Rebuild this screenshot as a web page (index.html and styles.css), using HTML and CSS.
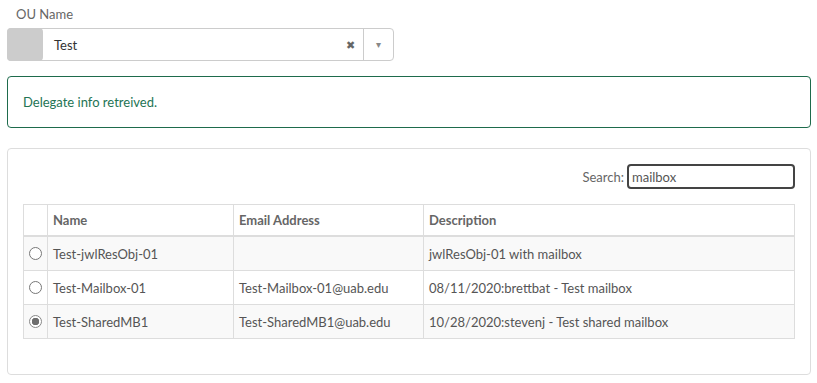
FILE: index.html
```html
<!DOCTYPE html>
<html lang="en">
<head>
    <meta charset="UTF-8">
    <title>Delegates</title>
    <link rel="stylesheet" href="styles.css">
</head>
<body>
    <div class="page">
        <div class="field">
            <label class="field-label">OU Name</label>
            <div class="select">
                <span class="select-swatch"></span>
                <span class="select-value">Test</span>
                <span class="select-clear">&#x2716;</span>
                <span class="select-arrow">&#x25BE;</span>
            </div>
        </div>

        <div class="alert">Delegate info retreived.</div>

        <div class="panel">
            <div class="search">
                <label for="search">Search:</label>
                <input type="text" id="search" value="mailbox">
            </div>
            <table class="grid">
                <thead>
                    <tr>
                        <th class="col-radio"></th>
                        <th class="col-name">Name</th>
                        <th class="col-email">Email Address</th>
                        <th>Description</th>
                    </tr>
                </thead>
                <tbody>
                    <tr>
                        <td class="col-radio"><span class="radio"></span></td>
                        <td>Test-jwlResObj-01</td>
                        <td></td>
                        <td>jwlResObj-01 with mailbox</td>
                    </tr>
                    <tr>
                        <td class="col-radio"><span class="radio"></span></td>
                        <td>Test-Mailbox-01</td>
                        <td>Test-Mailbox-01@uab.edu</td>
                        <td>08/11/2020:brettbat - Test mailbox</td>
                    </tr>
                    <tr>
                        <td class="col-radio"><span class="radio checked"></span></td>
                        <td>Test-SharedMB1</td>
                        <td>Test-SharedMB1@uab.edu</td>
                        <td>10/28/2020:stevenj - Test shared mailbox</td>
                    </tr>
                </tbody>
            </table>
        </div>
    </div>
</body>
</html>
```

FILE: styles.css
```css
body {
    margin: 0;
    font-family: Lato, "Open Sans", sans-serif;
    font-size: 13px;
    color: #555;
    background: #fff;
}
.page {
    padding: 6px 6px 0 7px;
}
.field-label {
    display: block;
    padding-left: 9px;
    height: 22px;
    line-height: 16px;
    color: #666;
}
.select {
    display: flex;
    align-items: center;
    width: 385px;
    height: 31px;
    border: 1px solid #ccc;
    border-radius: 4px;
}
.select-swatch {
    width: 36px;
    height: 33px;
    margin: -1px 0 0 -1px;
    background: #ccc;
    border-radius: 4px;
}
.select-value {
    flex: 1;
    padding-left: 11px;
    color: #333;
}
.select-clear {
    width: 20px;
    font-size: 11px;
    color: #666;
    text-align: center;
}
.select-arrow {
    width: 29px;
    height: 31px;
    line-height: 31px;
    margin-left: 3px;
    border-left: 1px solid #ccc;
    text-align: center;
    font-size: 10px;
    color: #888;
}
.alert {
    margin-top: 15px;
    height: 50px;
    line-height: 50px;
    padding-left: 15px;
    border: 1px solid #1e6b4c;
    border-radius: 4px;
    color: #237454;
}
.panel {
    margin-top: 20px;
    width: 772px;
    padding: 15px 15px 35px 15px;
    border: 1px solid #ddd;
    border-radius: 4px;
}
.search {
    display: flex;
    justify-content: flex-end;
    align-items: center;
    gap: 3px;
    margin-bottom: 15px;
}
.search label {
    color: #666;
}
.search input {
    width: 158px;
    height: 21px;
    padding: 0 3px;
    border: 2px solid #444;
    border-radius: 4px;
    font: inherit;
    color: #555;
    outline: none;
}
.grid {
    width: 100%;
    border-collapse: collapse;
}
.grid th, .grid td {
    border: 1px solid #ddd;
    text-align: left;
    padding: 0 5px;
}
.grid th {
    height: 30px;
    font-weight: bold;
    color: #666;
    border-bottom: 2px solid #ddd;
}
.grid td {
    height: 33px;
}
.grid tbody tr:nth-child(odd) {
    background: #f9f9f9;
}
.col-radio {
    width: 13px;
}
.col-name {
    width: 175px;
}
.col-email {
    width: 179px;
}
.radio {
    display: block;
    box-sizing: border-box;
    width: 13px;
    height: 13px;
    border: 1px solid #777;
    border-radius: 50%;
    background: #fff;
}
.radio.checked {
    border-color: #888;
    background: radial-gradient(circle, #6e6e6e 0 3.5px, #fff 4px);
}
```
